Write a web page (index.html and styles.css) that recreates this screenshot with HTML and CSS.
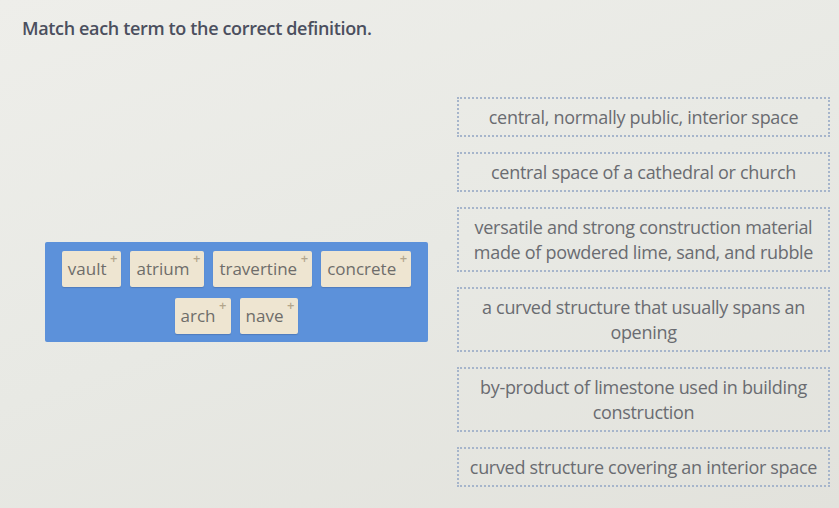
FILE: index.html
```html
<!DOCTYPE html>
<html lang="en">
<head>
    <meta charset="UTF-8">
    <title>Match each term</title>
    <link rel="stylesheet" href="styles.css">
</head>
<body>
    <div class="question">
        <h1 class="prompt">Match each term to the correct definition.</h1>

        <div class="matching">
            <div class="term-column">
                <div class="term-bank">
                    <div class="term">vault<span class="plus">+</span></div>
                    <div class="term">atrium<span class="plus">+</span></div>
                    <div class="term">travertine<span class="plus">+</span></div>
                    <div class="term">concrete<span class="plus">+</span></div>
                    <div class="term">arch<span class="plus">+</span></div>
                    <div class="term">nave<span class="plus">+</span></div>
                </div>
            </div>

            <div class="definition-column">
                <div class="definition">central, normally public, interior space</div>
                <div class="definition">central space of a cathedral or church</div>
                <div class="definition">versatile and strong construction material made of powdered lime, sand, and rubble</div>
                <div class="definition">a curved structure that usually spans an opening</div>
                <div class="definition">by-product of limestone used in building construction</div>
                <div class="definition">curved structure covering an interior space</div>
            </div>
        </div>
    </div>
</body>
</html>
```

FILE: styles.css
```css
body {
    margin: 0;
    height: 508px;
    overflow: hidden;
    font-family: 'Open Sans', 'Liberation Sans', sans-serif;
    background: linear-gradient(160deg, #eeeeea 0%, #e8e9e4 50%, #e2e2dc 100%);
}

.question {
    padding: 17px 0 0 22px;
}

.prompt {
    margin: 0;
    font-size: 18px;
    line-height: 22px;
    font-weight: 600;
    letter-spacing: -0.35px;
    color: #4b4f5e;
}

.matching {
    display: flex;
    align-items: center;
    gap: 29px;
    margin-top: 58px;
}

.term-column {
    padding-left: 23px;
}

.term-bank {
    width: 383px;
    box-sizing: border-box;
    display: flex;
    flex-wrap: wrap;
    justify-content: center;
    gap: 11px 9px;
    padding: 9px 8px 8px;
    background-color: #5c91da;
    border-radius: 2px;
}

.term {
    position: relative;
    height: 36px;
    line-height: 36px;
    padding: 0 15px 0 6px;
    font-size: 17px;
    color: #6e6d6a;
    background-color: #eee5d1;
    border-radius: 2px;
    box-shadow: 0 1px 1px rgba(40, 60, 100, 0.25);
}

.plus {
    position: absolute;
    top: -11px;
    right: 4px;
    font-size: 13px;
    font-weight: 600;
    color: #b3a58b;
}

.definition-column {
    width: 373px;
    display: flex;
    flex-direction: column;
    gap: 15px;
}

.definition {
    padding: 5.5px 4px;
    border: 2px dotted #a6b5cb;
    font-size: 18px;
    line-height: 25px;
    letter-spacing: -0.3px;
    color: #6a6c71;
    text-align: center;
}
```
